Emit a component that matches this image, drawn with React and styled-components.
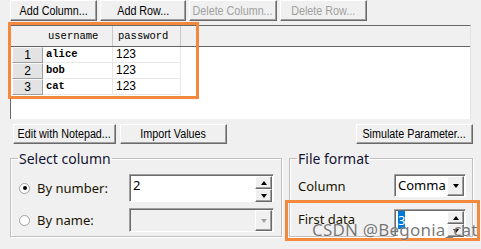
import styled, { createGlobalStyle } from "styled-components";

const GlobalStyle = createGlobalStyle`
  html, body {
    margin: 0;
    padding: 0;
    background: #f0f0f0;
  }
  * {
    box-sizing: border-box;
  }
`;

const Page = styled.div`
  position: relative;
  width: 481px;
  height: 249px;
  overflow: hidden;
  background: #f0f0f0;
  font-family: "Liberation Sans", Arial, sans-serif;
  font-size: 12px;
  color: #000;
`;

const Toolbar = styled.div`
  display: flex;
  gap: 3px;
  padding-left: 10px;
  height: 21px;
`;

const Button = styled.button`
  display: flex;
  align-items: center;
  justify-content: center;
  width: ${(p) => p.$w}px;
  height: ${(p) => p.$h || 21}px;
  margin-left: ${(p) => p.$ml || 0}px;
  padding: 0;
  overflow: hidden;
  white-space: nowrap;
  background: #f0f0f0;
  border: 1px solid;
  border-color: #ffffff #696969 #696969 #ffffff;
  box-shadow: inset -1px -1px 0 #a0a0a0;
  font-family: "Liberation Sans", Arial, sans-serif;
  font-size: 12.5px;
  color: ${(p) => (p.disabled ? "#a0a0a0" : "#000")};
`;

/* the dialog font is a tall, narrow face */
const Caption = styled.span`
  display: inline-block;
  transform: scaleX(0.86);
`;

const GridFrame = styled.div`
  margin: 4px 10px 0 10px;
  height: 94px;
  background: #fff;
  border-left: 1px solid #696969;
  border-top: 1px solid #696969;
  border-right: 1px solid #e3e3e3;
`;

const GridHeader = styled.div`
  display: flex;
  height: 21px;
  background: #f0f0f0;
  border-bottom: 1px solid #646464;
`;

const Row = styled.div`
  display: flex;
  height: 16px;
`;

const Corner = styled.div`
  width: 32px;
`;

const HeadCell = styled.div`
  width: ${(p) => p.$w}px;
  padding-left: ${(p) => p.$pl}px;
  border-right: 1px solid #c8c8c8;
  line-height: 20px;
  font-family: "Liberation Mono", "Courier New", monospace;
  font-size: 10.5px;
`;

const RowHead = styled.div`
  width: 31px;
  margin-left: 1px;
  background: #e3e3e3;
  border: 1px solid;
  border-color: #f8f8f8 #a0a0a0 #a0a0a0 #f8f8f8;
  text-align: center;
  line-height: 14px;
  font-size: 12px;
`;

const Cell = styled.div`
  width: ${(p) => p.$w}px;
  padding-left: 3px;
  border-right: 1px solid #e8e8e8;
  border-bottom: 1px solid #e8e8e8;
  line-height: 15px;
  font-family: ${(p) =>
    p.$mono ? `"Liberation Mono", "Courier New", monospace` : `"Liberation Sans", Arial, sans-serif`};
  font-weight: ${(p) => (p.$mono ? 700 : 400)};
  font-size: ${(p) => (p.$mono ? 10.5 : 12)}px;
`;

const ActionRow = styled.div`
  display: flex;
  align-items: center;
  margin-top: 5px;
  padding-left: 13px;
  gap: 4px;
`;

const GroupRow = styled.div`
  display: flex;
  margin-top: 5px;
  padding-left: 10px;
  gap: 7px;
`;

const Group = styled.fieldset`
  width: ${(p) => p.$w}px;
  height: 88px;
  margin: 0;
  padding: 6px 0 0 8px;
  border: 1px solid #c0c0c0;
  box-shadow: 1px 1px 0 #fff, inset 1px 1px 0 #fff;
  font-family: "Noto Sans", "Open Sans", sans-serif;
  font-size: 13px;
`;

const Legend = styled.legend`
  padding: 0 1px;
  margin-left: -1px;
  font-family: "Noto Sans", "Open Sans", sans-serif;
  font-size: 14px;
  line-height: 19px;
  color: #141432;
`;

const FieldRow = styled.div`
  display: flex;
  align-items: ${(p) => (p.$top ? "flex-start" : "center")};
  height: ${(p) => p.$h}px;
  margin-bottom: ${(p) => p.$mb || 0}px;
`;

const Radio = styled.span`
  width: 11px;
  height: 11px;
  border-radius: 50%;
  border: 1px solid #a0a0a0;
  background: #fff;
  display: flex;
  align-items: center;
  justify-content: center;
  margin-right: 7px;
  &::after {
    content: "";
    width: 4px;
    height: 4px;
    border-radius: 50%;
    background: ${(p) => (p.$on ? "#000" : "transparent")};
  }
`;

const Label = styled.span`
  width: ${(p) => p.$w}px;
  padding-top: ${(p) => p.$pt || 0}px;
  color: #1a1400;
`;

const Field = styled.div`
  position: relative;
  display: flex;
  width: ${(p) => p.$w}px;
  height: ${(p) => p.$h}px;
  background: ${(p) => (p.$off ? "#f0f0f0" : "#fff")};
  border: 1px solid;
  border-color: #a0a0a0 #ffffff #ffffff #a0a0a0;
  box-shadow: inset 1px 1px 0 #696969;
`;

const FieldText = styled.div`
  flex: 1;
  overflow: hidden;
  white-space: nowrap;
  padding: 2px 0 0 3px;
  font-family: "Noto Sans", "Open Sans", sans-serif;
  font-size: 13px;
  line-height: 17px;
`;

const Selected = styled.span`
  background: #0078d7;
  color: #fff;
`;

const SideButtons = styled.div`
  display: flex;
  flex-direction: column;
  width: 17px;
  margin: 1px 1px 0 0;
`;

const ArrowButton = styled.div`
  flex: ${(p) => (p.$grow ? 1 : "0 0 auto")};
  height: ${(p) => (p.$h ? `${p.$h}px` : "auto")};
  display: flex;
  align-items: center;
  justify-content: center;
  background: #f0f0f0;
  border: 1px solid;
  border-color: #ffffff #696969 #696969 #ffffff;
  box-shadow: inset -1px -1px 0 #a0a0a0;
`;

const Arrow = styled.span`
  width: 0;
  height: 0;
  border-left: 3.5px solid transparent;
  border-right: 3.5px solid transparent;
  ${(p) =>
    p.$up
      ? `border-bottom: 4px solid ${p.$off ? "#a0a0a0" : "#000"};`
      : `border-top: 4px solid ${p.$off ? "#a0a0a0" : "#000"};`}
`;

const Highlight = styled.div`
  position: absolute;
  left: ${(p) => p.$x}px;
  top: ${(p) => p.$y}px;
  width: ${(p) => p.$w}px;
  height: ${(p) => p.$h}px;
  border: 3px solid #f2893c;
  pointer-events: none;
`;

const Watermark = styled.div`
  position: absolute;
  left: 312px;
  top: 218px;
  font-family: "Noto Sans", "Open Sans", sans-serif;
  font-size: 17px;
  letter-spacing: 0.2px;
  color: rgba(95, 95, 95, 0.85);
  text-shadow: 0 0 1px rgba(255, 255, 255, 0.8);
  pointer-events: none;
`;

const rows = [
  ["1", "alice", "123"],
  ["2", "bob", "123"],
  ["3", "cat", "123"],
];

function Spin({ w, h, children }) {
  return (
    <Field $w={w} $h={h}>
      <FieldText>{children}</FieldText>
      <SideButtons>
        <ArrowButton $h={13}>
          <Arrow $up />
        </ArrowButton>
        <ArrowButton $h={13}>
          <Arrow />
        </ArrowButton>
      </SideButtons>
    </Field>
  );
}

function Combo({ w, h, off, children }) {
  return (
    <Field $w={w} $h={h} $off={off}>
      <FieldText>{children}</FieldText>
      <SideButtons>
        <ArrowButton $grow>
          <Arrow $off={off} />
        </ArrowButton>
      </SideButtons>
    </Field>
  );
}

export default function App() {
  return (
    <Page>
      <GlobalStyle />
      <Toolbar>
        <Button $w={87}>
          <Caption>Add Column...</Caption>
        </Button>
        <Button $w={86}>
          <Caption>Add Row...</Caption>
        </Button>
        <Button $w={88} disabled>
          <Caption>Delete Column...</Caption>
        </Button>
        <Button $w={87} disabled>
          <Caption>Delete Row...</Caption>
        </Button>
      </Toolbar>

      <GridFrame>
        <GridHeader>
          <Corner />
          <HeadCell $w={70} $pl={5}>
            username
          </HeadCell>
          <HeadCell $w={68} $pl={5}>
            password
          </HeadCell>
        </GridHeader>
        {rows.map(([n, user, pass]) => (
          <Row key={n}>
            <RowHead>{n}</RowHead>
            <Cell $w={70} $mono>
              {user}
            </Cell>
            <Cell $w={68}>{pass}</Cell>
          </Row>
        ))}
      </GridFrame>

      <ActionRow>
        <Button $w={103} $h={20}>
          <Caption>Edit with Notepad...</Caption>
        </Button>
        <Button $w={107} $h={20}>
          <Caption>Import Values</Caption>
        </Button>
        <Button $w={117} $h={20} $ml={125}>
          <Caption>Simulate Parameter...</Caption>
        </Button>
      </ActionRow>

      <GroupRow>
        <Group $w={272}>
          <Legend>Select column</Legend>
          <FieldRow $h={28} $mb={6}>
            <Radio $on />
            <Label $w={92}>By number:</Label>
            <Spin w={145} h={28}>
              2
            </Spin>
          </FieldRow>
          <FieldRow $h={24}>
            <Radio />
            <Label $w={92}>By name:</Label>
            <Combo w={145} h={24} off />
          </FieldRow>
        </Group>
        <Group $w={184}>
          <Legend>File format</Legend>
          <FieldRow $h={23} $mb={12}>
            <Label $w={96}>Column</Label>
            <Combo w={72} h={23}>
              Comma
            </Combo>
          </FieldRow>
          <FieldRow $h={28} $top>
            <Label $w={96} $pt={1}>
              First data
            </Label>
            <Spin w={72} h={28}>
              <Selected>3</Selected>
            </Spin>
          </FieldRow>
        </Group>
      </GroupRow>

      <Highlight $x={8} $y={22} $w={191} $h={77} />
      <Highlight $x={285} $y={200} $w={195} $h={41} />
      <Watermark>CSDN @Begonia_cat</Watermark>
    </Page>
  );
}
